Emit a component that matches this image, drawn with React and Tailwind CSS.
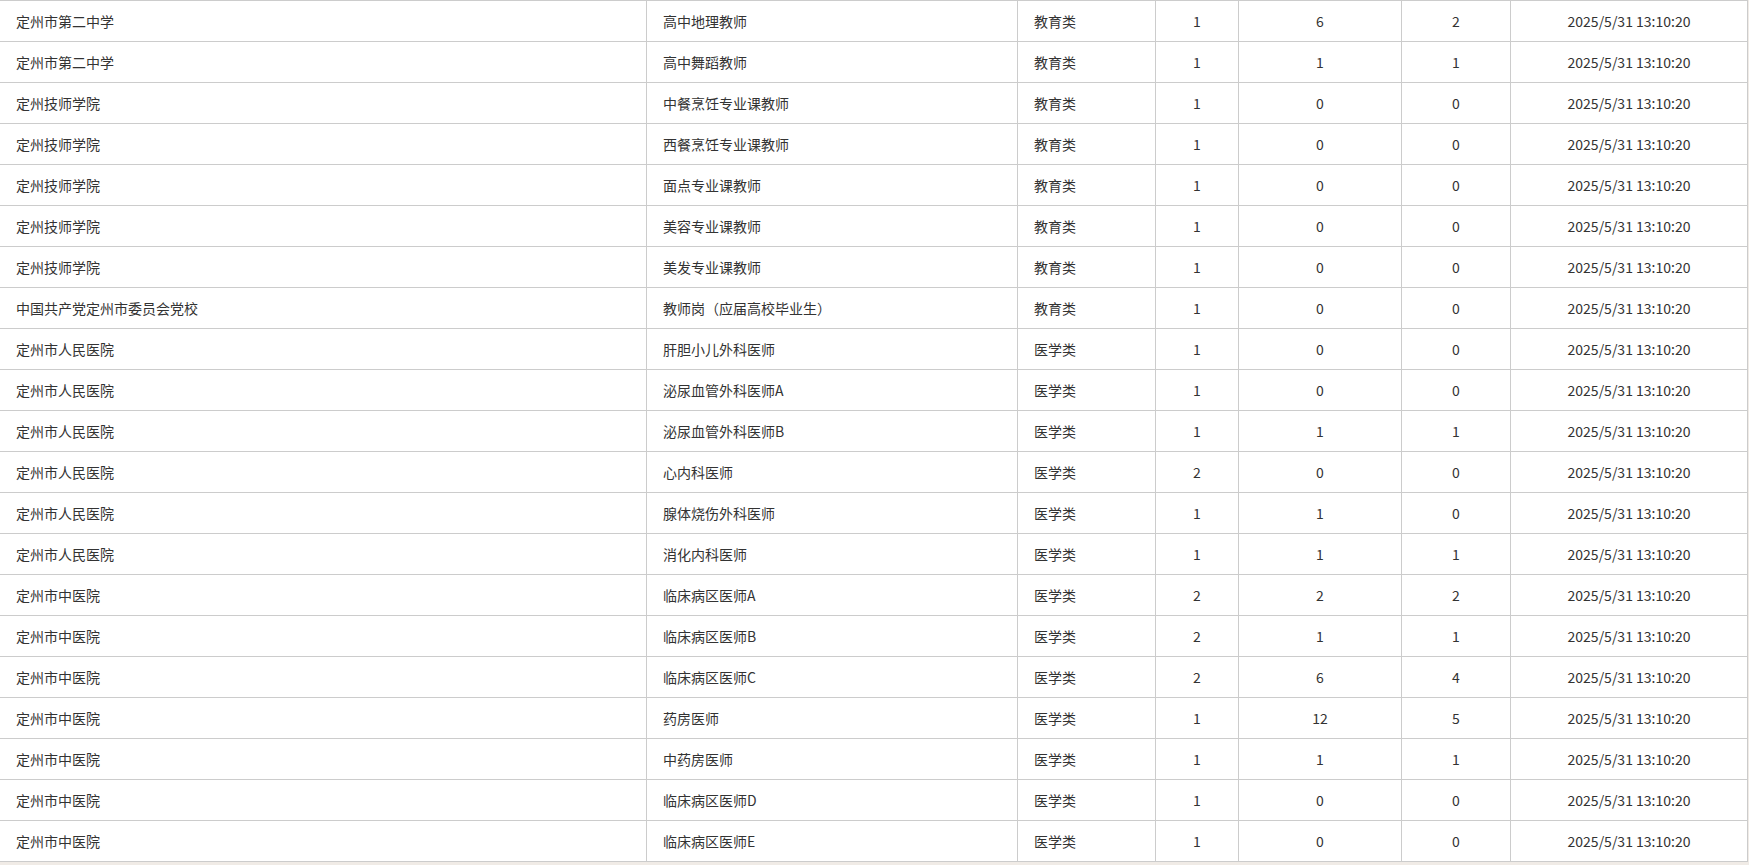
import React from "react";

const rows = [
  ["定州市第二中学", "高中地理教师", "教育类", "1", "6", "2"],
  ["定州市第二中学", "高中舞蹈教师", "教育类", "1", "1", "1"],
  ["定州技师学院", "中餐烹饪专业课教师", "教育类", "1", "0", "0"],
  ["定州技师学院", "西餐烹饪专业课教师", "教育类", "1", "0", "0"],
  ["定州技师学院", "面点专业课教师", "教育类", "1", "0", "0"],
  ["定州技师学院", "美容专业课教师", "教育类", "1", "0", "0"],
  ["定州技师学院", "美发专业课教师", "教育类", "1", "0", "0"],
  ["中国共产党定州市委员会党校", "教师岗（应届高校毕业生）", "教育类", "1", "0", "0"],
  ["定州市人民医院", "肝胆小儿外科医师", "医学类", "1", "0", "0"],
  ["定州市人民医院", "泌尿血管外科医师A", "医学类", "1", "0", "0"],
  ["定州市人民医院", "泌尿血管外科医师B", "医学类", "1", "1", "1"],
  ["定州市人民医院", "心内科医师", "医学类", "2", "0", "0"],
  ["定州市人民医院", "腺体烧伤外科医师", "医学类", "1", "1", "0"],
  ["定州市人民医院", "消化内科医师", "医学类", "1", "1", "1"],
  ["定州市中医院", "临床病区医师A", "医学类", "2", "2", "2"],
  ["定州市中医院", "临床病区医师B", "医学类", "2", "1", "1"],
  ["定州市中医院", "临床病区医师C", "医学类", "2", "6", "4"],
  ["定州市中医院", "药房医师", "医学类", "1", "12", "5"],
  ["定州市中医院", "中药房医师", "医学类", "1", "1", "1"],
  ["定州市中医院", "临床病区医师D", "医学类", "1", "0", "0"],
  ["定州市中医院", "临床病区医师E", "医学类", "1", "0", "0"],
];

export default function App() {
  return (
    <div
      className="min-h-[865px] w-full bg-[#f0ebe6] text-[14px] text-[#333333]"
      style={{ fontFamily: '"Noto Sans CJK SC", "Noto Sans", sans-serif' }}
    >
      <div className="w-[1748px] bg-white border-b border-[#cccccc]">
        {rows.map((r, i) => (
          <div
            key={i}
            className="grid h-[41px] grid-cols-[647px_371px_138px_83px_163px_109px_237px] border-t border-[#cccccc]"
          >
            <div className="flex items-center border-r border-[#cccccc] pl-4 whitespace-nowrap">{r[0]}</div>
            <div className="flex items-center border-r border-[#cccccc] pl-4 whitespace-nowrap">{r[1]}</div>
            <div className="flex items-center border-r border-[#cccccc] pl-4 whitespace-nowrap">{r[2]}</div>
            <div className="flex items-center justify-center border-r border-[#cccccc]">{r[3]}</div>
            <div className="flex items-center justify-center border-r border-[#cccccc]">{r[4]}</div>
            <div className="flex items-center justify-center border-r border-[#cccccc]">{r[5]}</div>
            <div className="flex items-center justify-center border-r border-[#cccccc] whitespace-nowrap">2025/5/31 13:10:20</div>
          </div>
        ))}
      </div>
    </div>
  );
}
